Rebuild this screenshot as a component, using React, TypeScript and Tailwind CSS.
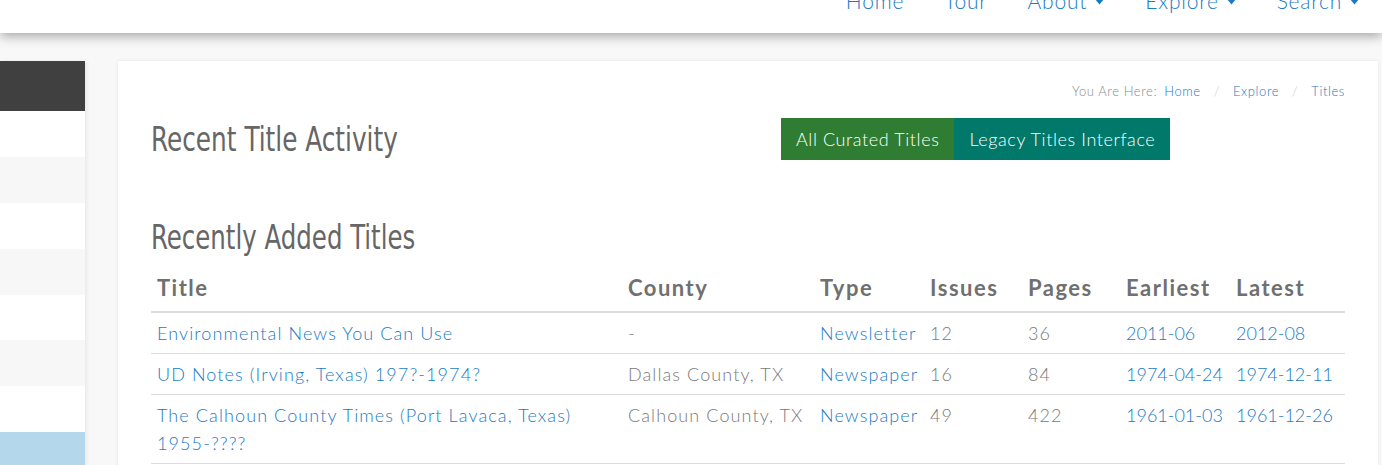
import React from "react";

const body = { fontFamily: "Lato, 'Open Sans', sans-serif" };
const head = { fontFamily: "'Liberation Sans Narrow', 'DejaVu Sans Condensed', Roboto, sans-serif", fontStretch: "condensed" as const };

function Caret() {
  return (
    <svg width="11" height="7" viewBox="0 0 11 7" className="ml-[7px] inline-block">
      <path d="M0.5 0.5 L10.5 0.5 L5.5 6.5 Z" fill="#1a7bc4" />
    </svg>
  );
}

const rows = [
  { title: "Environmental News You Can Use", county: "-", type: "Newsletter", issues: "12", pages: "36", earliest: "2011-06", latest: "2012-08" },
  { title: "UD Notes (Irving, Texas) 197?-1974?", county: "Dallas County, TX", type: "Newspaper", issues: "16", pages: "84", earliest: "1974-04-24", latest: "1974-12-11" },
  { title: "The Calhoun County Times (Port Lavaca, Texas) 1955-????", county: "Calhoun County, TX", type: "Newspaper", issues: "49", pages: "422", earliest: "1961-01-03", latest: "1961-12-26" },
];

export default function App() {
  return (
    <div className="w-[1382px] h-[465px] overflow-hidden bg-[#f8f8f8] relative" style={body}>
      <nav className="h-[33px] bg-white shadow-[0_3px_12px_rgba(0,0,0,0.35)] relative z-10 flex justify-end pr-[22px]">
        <ul className="flex gap-[40px] text-[21px] font-light tracking-[0.8px] text-[#1a7bc4] -mt-[14px] h-[30px] leading-[30px]">
          <li className="flex items-center">Home</li>
          <li className="flex items-center">Tour</li>
          <li className="flex items-center">About<Caret /></li>
          <li className="flex items-center">Explore<Caret /></li>
          <li className="flex items-center">Search<Caret /></li>
        </ul>
      </nav>
      <div className="flex pt-[28px] gap-[33px]">
        <aside className="w-[85px] shrink-0 shadow-[2px_0_4px_rgba(0,0,0,0.06)]">
          <div className="h-[50px] bg-[#404040]" />
          <div className="h-[46px] bg-white" />
          <div className="h-[46px] bg-[#f7f7f7]" />
          <div className="h-[46px] bg-white" />
          <div className="h-[46px] bg-[#f7f7f7]" />
          <div className="h-[45px] bg-white" />
          <div className="h-[46px] bg-[#f7f7f7]" />
          <div className="h-[46px] bg-white" />
          <div className="h-[46px] bg-[#b4d7eb]" />
        </aside>
        <main className="w-[1260px] bg-white shadow-[0_0_4px_rgba(0,0,0,0.08)] px-[33px] pt-[20px] pb-[40px]">
          <div className="flex justify-end items-center text-[13px] font-light tracking-[0.6px] leading-[20px]">
            <span className="text-[#8a8a8a] mr-[7px]">You Are Here:</span>
            <span className="text-[#1a7bc4]">Home</span>
            <span className="text-[#cccccc] px-[13px]">/</span>
            <span className="text-[#1a7bc4]">Explore</span>
            <span className="text-[#cccccc] px-[13px]">/</span>
            <span className="text-[#1a7bc4]">Titles</span>
          </div>
          <div className="flex items-center mt-[17px]">
            <div className="w-[630px]">
              <h1 className="inline-block origin-left scale-x-[0.81] whitespace-nowrap text-[34px] leading-[42px] text-[#666666]" style={head}>Recent Title Activity</h1>
            </div>
            <div className="flex text-white text-[18px] font-light tracking-[0.6px]">
              <span className="h-[42px] flex items-center px-[15px] bg-[#2e7d32]">All Curated Titles</span>
              <span className="h-[42px] flex items-center px-[15px] bg-[#00796b]">Legacy Titles Interface</span>
            </div>
          </div>
          <div className="mt-[57px]">
            <h2 className="inline-block origin-left scale-x-[0.8] whitespace-nowrap text-[34px] leading-[40px] text-[#666666]" style={head}>Recently Added Titles</h2>
          </div>
          <table className="mt-[10px] w-[1194px] table-fixed border-collapse text-[18px] font-light tracking-[1.1px]">
            <colgroup>
              <col className="w-[471px]" />
              <col className="w-[192px]" />
              <col className="w-[110px]" />
              <col className="w-[98px]" />
              <col className="w-[98px]" />
              <col className="w-[110px]" />
              <col className="w-[115px]" />
            </colgroup>
            <thead>
              <tr className="border-b-2 border-[#dddddd] text-left text-[22px] text-[#707070]">
                {["Title", "County", "Type", "Issues", "Pages", "Earliest", "Latest"].map((h) => (
                  <th key={h} className="px-[6px] pt-[5px] pb-[7px] leading-[32px] font-bold tracking-[1.5px]">{h}</th>
                ))}
              </tr>
            </thead>
            <tbody className="leading-[28px]">
              {rows.map((r) => (
                <tr key={r.title} className="border-b border-[#dddddd] align-top">
                  <td className="px-[6px] py-[6px] text-[#1a7bc4]">{r.title}</td>
                  <td className="px-[6px] py-[6px] text-[#7a7a7a] whitespace-nowrap">{r.county}</td>
                  <td className="px-[6px] py-[6px] text-[#1a7bc4] whitespace-nowrap">{r.type}</td>
                  <td className="px-[6px] py-[6px] text-[#7a7a7a]">{r.issues}</td>
                  <td className="px-[6px] py-[6px] text-[#7a7a7a]">{r.pages}</td>
                  <td className="px-[6px] py-[6px] text-[#1a7bc4] whitespace-nowrap tracking-[0px]">{r.earliest}</td>
                  <td className="px-[6px] py-[6px] text-[#1a7bc4] whitespace-nowrap tracking-[0px]">{r.latest}</td>
                </tr>
              ))}
            </tbody>
          </table>
        </main>
      </div>
    </div>
  );
}
